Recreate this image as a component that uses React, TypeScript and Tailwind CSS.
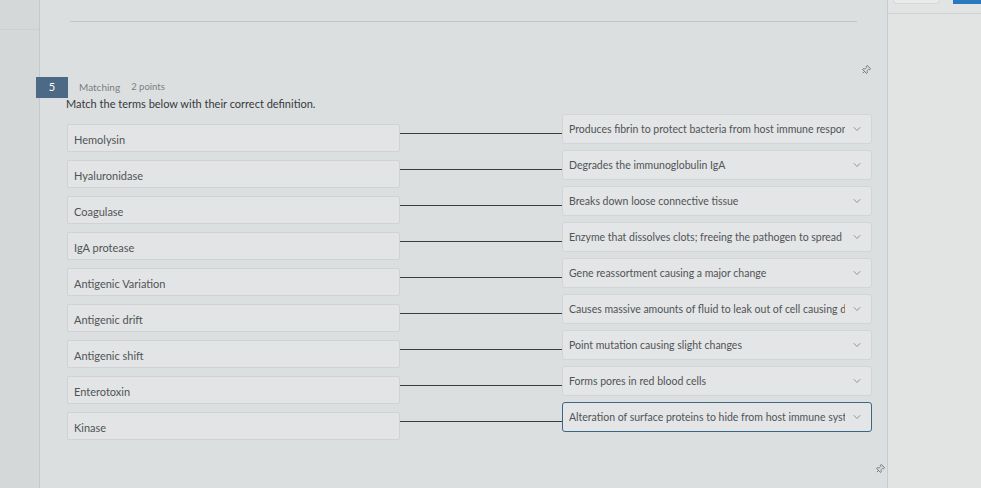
import { Pin, ChevronDown } from 'lucide-react';

const rows = [
  { term: 'Hemolysin', answer: 'Produces fibrin to protect bacteria from host immune response' },
  { term: 'Hyaluronidase', answer: 'Degrades the immunoglobulin IgA' },
  { term: 'Coagulase', answer: 'Breaks down loose connective tissue' },
  { term: 'IgA protease', answer: 'Enzyme that dissolves clots; freeing the pathogen to spread' },
  { term: 'Antigenic Variation', answer: 'Gene reassortment causing a major change' },
  { term: 'Antigenic drift', answer: 'Causes massive amounts of fluid to leak out of cell causing diarrhea' },
  { term: 'Antigenic shift', answer: 'Point mutation causing slight changes' },
  { term: 'Enterotoxin', answer: 'Forms pores in red blood cells' },
  { term: 'Kinase', answer: 'Alteration of surface proteins to hide from host immune system', active: true },
];

export default function App() {
  return (
    <div className="w-[981px] h-[488px] overflow-hidden flex bg-[#dcdfe0] text-[#505456]" style={{ fontFamily: 'Lato, "Open Sans", sans-serif' }}>
      {/* left gutter */}
      <div className="w-[40px] shrink-0 bg-[#d5d8d9] border-r border-[#c6c9cb]">
        <div className="h-[30px] border-b border-[#cdd0d2]" />
      </div>

      {/* main column */}
      <div className="w-[848px] shrink-0 border-r border-[#c9cccd] flex flex-col">
        <div className="mx-[30px] h-[22px] border-b border-[#c3c6c8]" />

        <div className="relative flex items-center mt-[55px] h-[21px]">
          <div className="-ml-[4px] w-[32px] h-[21px] bg-[#4c6a86] text-white text-[11px] flex items-center justify-center">5</div>
          <span className="ml-[11px] text-[10px] text-[#7a7e80]">Matching</span>
          <span className="ml-[11px] text-[9.5px] text-[#7a7e80]">2 points</span>
          <Pin className="absolute left-[821px] -top-[12px] w-[10px] h-[10px] rotate-45 text-[#6b6f72]" strokeWidth={2} />
        </div>
        <p className="ml-[26px] mt-[-2px] text-[11px] text-[#35393c] leading-[16px]">Match the terms below with their correct definition.</p>

        <div className="flex flex-col gap-[6px] mt-[2px]">
          {rows.map((r) => (
            <div key={r.term} className="flex items-start h-[30px]">
              <div className="ml-[27px] mt-[10px] w-[333px] h-[28px] bg-[#e2e4e5] border border-[#d0d3d5] rounded-[2px] flex items-end pb-[4px] pl-[6px] text-[11px] leading-[14px]">
                {r.term}
              </div>
              <div className="mt-[19px] w-[162px] h-px bg-[#3a3c3e]" />
              <div
                className={`w-[310px] h-[30px] bg-[#e3e5e6] rounded-[3px] flex items-center pl-[6px] pr-[8px] ${
                  r.active ? 'border-[1.5px] border-[#3b6787]' : 'border border-[#d2d5d7]'
                }`}
              >
                <span className="flex-1 overflow-hidden whitespace-nowrap text-[10.5px] leading-[14px]">{r.answer}</span>
                <ChevronDown className="ml-[6px] w-[12px] h-[12px] text-[#75797c] shrink-0" strokeWidth={1.5} />
              </div>
            </div>
          ))}
        </div>

        <div className="flex justify-end pr-[2px] mt-[32px]">
          <Pin className="w-[10px] h-[10px] rotate-45 text-[#6b6f72]" strokeWidth={2} />
        </div>
      </div>

      {/* right column */}
      <div className="flex-1 bg-[#e2e3e3]">
        <div className="h-[14px] border-b border-[#d0d2d3] flex items-start justify-end gap-[13px]">
          <div className="w-[47px] h-[4px] bg-[#e9eaea] rounded-b-sm border-x border-b border-[#d6d8d9]" />
          <div className="w-[28px] h-[4px] bg-[#2a78bd]" />
        </div>
      </div>
    </div>
  );
}
